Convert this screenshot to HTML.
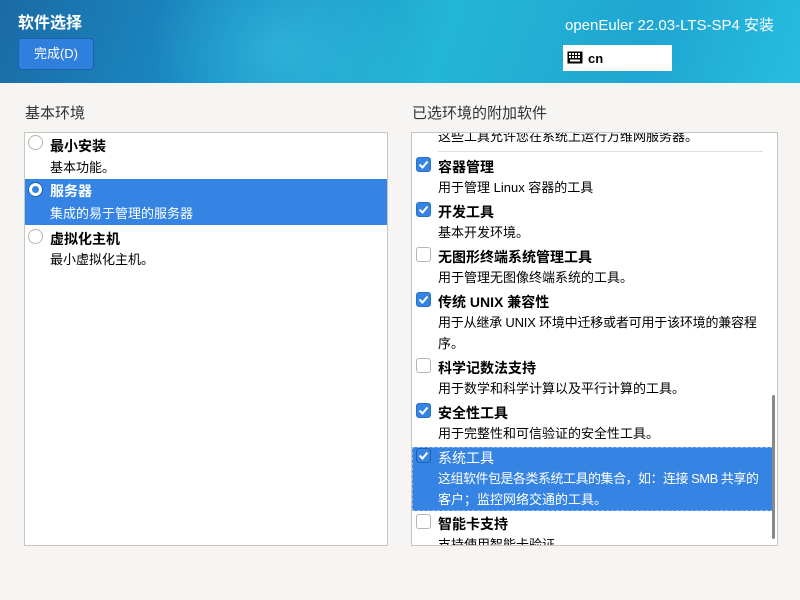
<!DOCTYPE html>
<html><head><meta charset="utf-8">
<style>
*{margin:0;padding:0;box-sizing:border-box}
body{width:800px;height:600px;overflow:hidden;background:#f6f5f4;font-family:"Liberation Sans","Noto Sans CJK SC",sans-serif;position:relative;color:#000}
.hdr{position:absolute;left:0;top:0;width:800px;height:83px;background:linear-gradient(110deg,#1b6aa6 0%,#1a8fc6 30%,#23b6d6 55%,#1fa6d2 80%,#26bde0 100%);overflow:hidden}
.hdr .glow{position:absolute;left:150px;top:-60px;width:260px;height:220px;border-radius:50%;background:radial-gradient(ellipse,rgba(60,200,230,.5),rgba(60,200,230,0) 70%)}
.t{position:absolute;white-space:nowrap;line-height:1}
.btn{position:absolute;left:18px;top:38px;width:76px;height:32px;background:#2f7fdc;border:1px solid #1d5fb0;border-radius:4px;color:#fff;font-size:13px;text-align:center;line-height:30px}
.kb{position:absolute;left:563px;top:45px;width:109px;height:26px;background:#fff}
.box{position:absolute;background:#fff;border:1px solid #c9c6c2;overflow:hidden}
.b{font-weight:bold;font-size:14px}
.d{font-size:13px}
.cb{position:absolute;width:15px;height:15px;border-radius:3px}
.on{background:#3584e4;border:1px solid #2a70c8}
.off{background:#fff;border:1px solid #b8b4b0}
.rad{position:absolute;width:15px;height:15px;border-radius:50%;border:1px solid #b8b4b0;background:#fff}
</style></head><body>
<div class="hdr"><div class="glow"></div></div>
<div class="t" style="left:18px;top:16px;color:#fff;font-size:16px;font-weight:bold">软件选择</div>
<div class="btn">完成(D)</div>
<div class="t" style="left:565px;top:18px;color:#fff;font-size:15px">openEuler 22.03-LTS-SP4 安装</div>
<div class="kb">
<svg style="position:absolute;left:4px;top:6px" width="16" height="13" viewBox="0 0 16 13"><rect x="0.5" y="0.5" width="15" height="12" fill="#000"/><g fill="#fff"><rect x="2" y="2" width="2" height="2"/><rect x="5" y="2" width="2" height="2"/><rect x="8" y="2" width="2" height="2"/><rect x="11" y="2" width="2" height="2"/><rect x="2" y="5" width="2" height="2"/><rect x="5" y="5" width="2" height="2"/><rect x="8" y="5" width="2" height="2"/><rect x="11" y="5" width="2" height="2"/><rect x="3" y="8.5" width="10" height="2"/></g></svg>
<div class="t" style="left:25px;top:7px;font-size:13px;font-weight:bold">cn</div>
</div>

<div class="t" style="left:25px;top:106px;font-size:15px;color:#2e3436">基本环境</div>
<div class="t" style="left:412px;top:106px;font-size:15px;color:#2e3436">已选环境的附加软件</div>

<div class="box" style="left:24px;top:132px;width:364px;height:414px">
 <div class="rad" style="left:3px;top:2px"></div>
 <div class="t b" style="left:25px;top:6px">最小安装</div>
 <div class="t d" style="left:25px;top:28px">基本功能。</div>
 <div style="position:absolute;left:0;top:46px;width:364px;height:46px;background:#3584e4"></div>
 <div class="rad" style="left:3px;top:49px;border-color:#1d5fb0"><div style="position:absolute;left:3px;top:3px;width:7px;height:7px;border-radius:50%;background:#3584e4"></div></div>
 <div class="t b" style="left:25px;top:51px;color:#fff">服务器</div>
 <div class="t d" style="left:25px;top:74px;color:#fff">集成的易于管理的服务器</div>
 <div class="rad" style="left:3px;top:96px"></div>
 <div class="t b" style="left:25px;top:99px">虚拟化主机</div>
 <div class="t d" style="left:25px;top:120px">最小虚拟化主机。</div>
</div>

<div class="box" style="left:411px;top:132px;width:367px;height:414px">
 <div class="t d" style="left:26px;top:-3px">这些工具允许您在系统上运行万维网服务器。</div>
 <div style="position:absolute;left:26px;top:18px;width:325px;height:1px;background:#ddd"></div>
 <div class="cb on" style="left:4px;top:24px"><svg width="13" height="13" viewBox="0 0 13 13"><path d="M2.5 6.5l3 3 5-6" stroke="#fff" stroke-width="2" fill="none"/></svg></div>
 <div class="t b" style="left:26px;top:27px">容器管理</div>
 <div class="t d" style="left:26px;top:48px">用于管理 Linux 容器的工具</div>

 <div class="cb on" style="left:4px;top:69px"><svg width="13" height="13" viewBox="0 0 13 13"><path d="M2.5 6.5l3 3 5-6" stroke="#fff" stroke-width="2" fill="none"/></svg></div>
 <div class="t b" style="left:26px;top:72px">开发工具</div>
 <div class="t d" style="left:26px;top:93px">基本开发环境。</div>

 <div class="cb off" style="left:4px;top:114px"></div>
 <div class="t b" style="left:26px;top:117px">无图形终端系统管理工具</div>
 <div class="t d" style="left:26px;top:138px">用于管理无图像终端系统的工具。</div>

 <div class="cb on" style="left:4px;top:159px"><svg width="13" height="13" viewBox="0 0 13 13"><path d="M2.5 6.5l3 3 5-6" stroke="#fff" stroke-width="2" fill="none"/></svg></div>
 <div class="t b" style="left:26px;top:162px">传统 UNIX 兼容性</div>
 <div class="t d" style="left:26px;top:183px;letter-spacing:-0.2px">用于从继承 UNIX 环境中迁移或者可用于该环境的兼容程</div>
 <div class="t d" style="left:26px;top:204px">序。</div>

 <div class="cb off" style="left:4px;top:225px"></div>
 <div class="t b" style="left:26px;top:228px">科学记数法支持</div>
 <div class="t d" style="left:26px;top:249px">用于数学和科学计算以及平行计算的工具。</div>

 <div class="cb on" style="left:4px;top:270px"><svg width="13" height="13" viewBox="0 0 13 13"><path d="M2.5 6.5l3 3 5-6" stroke="#fff" stroke-width="2" fill="none"/></svg></div>
 <div class="t b" style="left:26px;top:273px">安全性工具</div>
 <div class="t d" style="left:26px;top:294px">用于完整性和可信验证的安全性工具。</div>

 <div style="position:absolute;left:0;top:314px;width:361px;height:64px;background:#3584e4;border:1px dashed #8ab8ee"></div>
 <div class="cb" style="left:4px;top:315px;background:#3584e4;border:1px solid #1d5fb0"><svg width="13" height="13" viewBox="0 0 13 13"><path d="M2.5 6.5l3 3 5-6" stroke="#fff" stroke-width="2" fill="none"/></svg></div>
 <div class="t" style="left:26px;top:318px;font-size:14px;color:#fff">系统工具</div>
 <div class="t d" style="left:26px;top:339px;color:#fff;letter-spacing:-0.5px">这组软件包是各类系统工具的集合，如：连接 SMB 共享的</div>
 <div class="t d" style="left:26px;top:360px;color:#fff">客户；监控网络交通的工具。</div>

 <div class="cb off" style="left:4px;top:381px"></div>
 <div class="t b" style="left:26px;top:384px">智能卡支持</div>
 <div class="t d" style="left:26px;top:405px">支持使用智能卡验证</div>

 <div style="position:absolute;left:360px;top:262px;width:3px;height:144px;background:#888;border-radius:2px"></div>
</div>
</body></html>
